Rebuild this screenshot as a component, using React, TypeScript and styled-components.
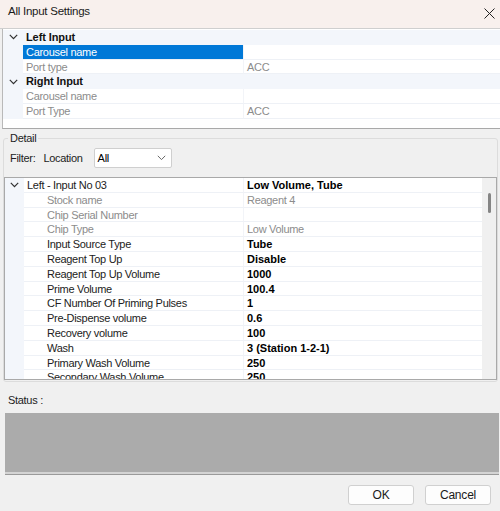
import React from "react";
import styled, { createGlobalStyle } from "styled-components";

const GlobalStyle = createGlobalStyle`
  html, body {
    margin: 0;
    padding: 0;
    background: #f0f0f0;
  }
  body {
    font-family: "Liberation Sans", Arial, sans-serif;
    font-size: 11px;
    letter-spacing: -0.3px;
    color: #1c1c1c;
  }
`;

const Dialog = styled.div`
  width: 500px;
  height: 511px;
  display: flex;
  flex-direction: column;
  background: #f0f0f0;
  overflow: hidden;
`;

const TitleBar = styled.div`
  height: 29px;
  flex: none;
  box-sizing: border-box;
  background: #f8f0ed;
  border-bottom: 1px solid #cfcfcf;
  display: flex;
  align-items: flex-start;
  justify-content: space-between;
  padding: 5px 4px 0 8px;
  font-size: 11.5px;
  letter-spacing: -0.25px;
  color: #1a1a1a;
`;

const CloseButton = styled.div`
  width: 14px;
  height: 14px;
  display: flex;
  align-items: center;
  justify-content: center;
  margin-top: 1px;
`;

const TopGrid = styled.div`
  flex: none;
  height: 100px;
  margin: 0 0 0 2px;
  box-sizing: border-box;
  border-left: 1px solid #b9b9b9;
  border-bottom: 1px solid #a9a9a9;
  background: #fff;
  padding-top: 1px;
  overflow: hidden;
`;

const Row = styled.div<{ $cols: string }>`
  display: grid;
  grid-template-columns: ${(p) => p.$cols};
  height: 14.8px;
  line-height: 14px;
`;

const MarginCell = styled.div`
  background: #f3f6fb;
  display: flex;
  align-items: center;
  justify-content: center;
`;

const CategoryCell = styled.div`
  grid-column: 2 / 4;
  background: #f3f6fb;
  font-weight: bold;
  letter-spacing: -0.1px;
  color: #111;
  padding-left: 3px;
  white-space: nowrap;
`;

const LabelCell = styled.div<{ $dim?: boolean; $selected?: boolean; $indent?: number }>`
  box-sizing: border-box;
  padding-left: ${(p) => p.$indent ?? 3}px;
  white-space: nowrap;
  overflow: hidden;
  background: ${(p) => (p.$selected ? "#0078d7" : "#fff")};
  color: ${(p) => (p.$selected ? "#fff" : p.$dim ? "#8c8c8c" : "#221c22")};
  border-bottom: 1px solid #eef1f6;
  border-right: 1px solid #f2f4f8;
`;

const ValueCell = styled.div<{ $dim?: boolean; $bold?: boolean }>`
  box-sizing: border-box;
  padding-left: 3px;
  white-space: nowrap;
  overflow: hidden;
  background: #fff;
  color: ${(p) => (p.$dim ? "#8c8c8c" : "#000")};
  font-weight: ${(p) => (p.$bold ? "bold" : "normal")};
  letter-spacing: ${(p) => (p.$bold ? "0" : "-0.3px")};
  border-bottom: 1px solid #eef1f6;
`;

const GroupBox = styled.fieldset`
  flex: none;
  margin: 2px 2px 0 3px;
  padding: 0;
  border: 1px solid #dcdcdc;
  border-radius: 3px;
  min-width: 0;
`;

const Legend = styled.legend`
  margin-left: 4px;
  padding: 0 2px;
  font-size: 11px;
  line-height: 14px;
  color: #1c1c1c;
`;

const FilterRow = styled.div`
  display: flex;
  align-items: center;
  height: 22px;
  margin-top: 2px;
  padding-left: 6px;
  gap: 8px;
`;

const FilterText = styled.span`
  color: #221c22;
`;

const Select = styled.div`
  width: 78px;
  height: 20px;
  box-sizing: border-box;
  margin-left: 3px;
  background: #fff;
  border: 1px solid #cfcfcf;
  border-radius: 2px;
  display: flex;
  align-items: center;
  justify-content: space-between;
  padding: 0 5px 0 3px;
  color: #000;
`;

const DetailGrid = styled.div`
  margin: 8px 0 1px 0;
  height: 203px;
  box-sizing: border-box;
  border: 1px solid #a9a9a9;
  background: #fff;
  display: flex;
  overflow: hidden;
`;

const DetailRows = styled.div`
  flex: 1;
  overflow: hidden;
`;

const ScrollBar = styled.div`
  width: 14px;
  flex: none;
  background: #f0f0f0;
  display: flex;
  justify-content: center;
  padding-top: 15px;
`;

const Thumb = styled.div`
  width: 3px;
  height: 20px;
  border-radius: 2px;
  background: #858585;
`;

const StatusLabel = styled.div`
  margin: 11px 0 0 8px;
  height: 14px;
  line-height: 14px;
  color: #1c1c1c;
`;

const StatusBox = styled.div`
  margin: 6px 1px 0 5px;
  height: 61px;
  box-sizing: border-box;
  background: #ababab;
  border-bottom: 2px solid #d4d4d4;
  box-shadow: 0 1px 0 #9a9a9a;
`;

const ButtonBar = styled.div`
  display: flex;
  justify-content: flex-end;
  gap: 11px;
  margin-top: 11px;
  padding-right: 9px;
`;

const Button = styled.div`
  width: 66px;
  height: 20px;
  box-sizing: border-box;
  background: #fdfdfd;
  border: 1px solid #d0d0d0;
  border-radius: 3px;
  display: flex;
  align-items: center;
  justify-content: center;
  font-size: 12px;
  letter-spacing: -0.2px;
  color: #1a1a1a;
`;

const Chevron = () => (
  <svg width="9" height="6" viewBox="0 0 9 6">
    <path d="M0.8 0.8 L4.5 4.6 L8.2 0.8" fill="none" stroke="#303030" strokeWidth="1.2" />
  </svg>
);

const topCols = "20px 221px 1fr";
const detailCols = "19px 220px 1fr";

type Item = { label: string; value: string; dim?: boolean };

const details: Item[] = [
  { label: "Stock name", value: "Reagent 4", dim: true },
  { label: "Chip Serial Number", value: "", dim: true },
  { label: "Chip Type", value: "Low Volume", dim: true },
  { label: "Input Source Type", value: "Tube" },
  { label: "Reagent Top Up", value: "Disable" },
  { label: "Reagent Top Up Volume", value: "1000" },
  { label: "Prime Volume", value: "100.4" },
  { label: "CF Number Of Priming Pulses", value: "1" },
  { label: "Pre-Dispense volume", value: "0.6" },
  { label: "Recovery volume", value: "100" },
  { label: "Wash", value: "3 (Station 1-2-1)" },
  { label: "Primary Wash Volume", value: "250" },
  { label: "Secondary Wash Volume", value: "250" },
];

const Category = ({ title }: { title: string }) => (
  <Row $cols={topCols}>
    <MarginCell>
      <Chevron />
    </MarginCell>
    <CategoryCell>{title}</CategoryCell>
  </Row>
);

export default function App() {
  return (
    <Dialog>
      <GlobalStyle />
      <TitleBar>
        <span>All Input Settings</span>
        <CloseButton>
          <svg width="11" height="11" viewBox="0 0 11 11">
            <path d="M0.5 0.5 L10.5 10.5 M10.5 0.5 L0.5 10.5" stroke="#222" strokeWidth="1" />
          </svg>
        </CloseButton>
      </TitleBar>

      <TopGrid>
        <Category title="Left Input" />
        <Row $cols={topCols}>
          <MarginCell />
          <LabelCell $selected>Carousel name</LabelCell>
          <ValueCell />
        </Row>
        <Row $cols={topCols}>
          <MarginCell />
          <LabelCell $dim>Port type</LabelCell>
          <ValueCell $dim>ACC</ValueCell>
        </Row>
        <Category title="Right Input" />
        <Row $cols={topCols}>
          <MarginCell />
          <LabelCell $dim>Carousel name</LabelCell>
          <ValueCell />
        </Row>
        <Row $cols={topCols}>
          <MarginCell />
          <LabelCell $dim>Port Type</LabelCell>
          <ValueCell $dim>ACC</ValueCell>
        </Row>
      </TopGrid>

      <GroupBox>
        <Legend>Detail</Legend>
        <FilterRow>
          <FilterText>Filter:</FilterText>
          <FilterText>Location</FilterText>
          <Select>
            <span>All</span>
            <svg width="9" height="6" viewBox="0 0 9 6">
              <path d="M0.8 0.8 L4.5 4.6 L8.2 0.8" fill="none" stroke="#6a6a6a" strokeWidth="1" />
            </svg>
          </Select>
        </FilterRow>
        <DetailGrid>
          <DetailRows>
            <Row $cols={detailCols}>
              <MarginCell>
                <Chevron />
              </MarginCell>
              <LabelCell>Left - Input No 03</LabelCell>
              <ValueCell $bold>Low Volume, Tube</ValueCell>
            </Row>
            {details.map((d) => (
              <Row $cols={detailCols} key={d.label}>
                <MarginCell />
                <LabelCell $dim={d.dim} $indent={23}>
                  {d.label}
                </LabelCell>
                <ValueCell $dim={d.dim} $bold={!d.dim}>
                  {d.value}
                </ValueCell>
              </Row>
            ))}
          </DetailRows>
          <ScrollBar>
            <Thumb />
          </ScrollBar>
        </DetailGrid>
      </GroupBox>

      <StatusLabel>Status :</StatusLabel>
      <StatusBox />

      <ButtonBar>
        <Button>OK</Button>
        <Button>Cancel</Button>
      </ButtonBar>
    </Dialog>
  );
}
